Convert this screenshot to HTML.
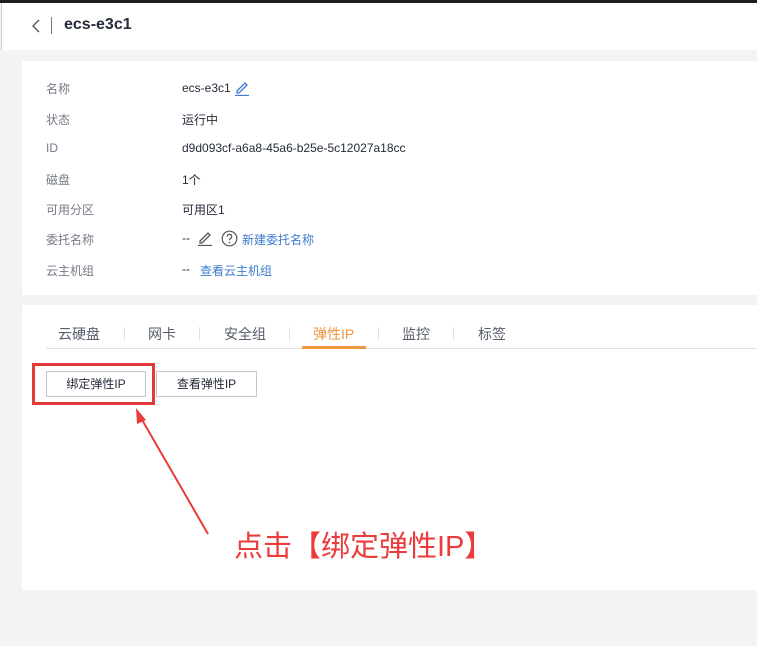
<!DOCTYPE html>
<html><head><meta charset="utf-8"><style>
*{margin:0;padding:0;box-sizing:border-box}
body{width:757px;height:646px;background:#f2f3f5;font-family:"Liberation Sans","Noto Sans CJK SC",sans-serif;position:relative;overflow:hidden;color:#252b3a}
.top{position:absolute;left:0;top:0;width:757px;height:3px;background:#1e1e1e}
.hdr{position:absolute;left:1px;top:3px;width:756px;height:47px;background:#fff;border-left:1px solid #ccc}
.abs{position:absolute;white-space:nowrap}
.card{position:absolute;left:22px;right:0;background:#fff}
.lbl{position:absolute;left:46px;font-size:12px;color:#757a86}
.val{position:absolute;left:182px;font-size:12px;color:#252b3a}
.link{color:#3c7ad0}
.tab{position:absolute;top:324px;font-size:14px;color:#575d6c}
.sep{position:absolute;top:327px;width:1px;height:14px;background:#dfe1e6}
.btn{position:absolute;top:371px;height:26px;border:1px solid #c3c6cc;background:#fff;font-size:12px;text-align:center;line-height:24px;color:#252b3a}
</style></head><body>
<div class="top"></div>
<div class="hdr"></div>
<svg class="abs" style="left:31px;top:19px" width="10" height="14"><path d="M8 1 L2 7 L8 13" stroke="#555" stroke-width="1.4" fill="none"/></svg>
<div class="abs" style="left:51px;top:17px;width:1px;height:17px;background:#777"></div>
<div class="abs" style="left:64px;top:16px;font-size:16px;font-weight:600;color:#252b3a">ecs-e3c1</div>

<div class="card" style="top:61px;height:234px"></div>
<div class="lbl" style="top:80px">名称</div><div class="val" style="top:81px">ecs-e3c1</div>
<svg class="abs" style="left:234px;top:80px" width="16" height="16"><path d="M3 11 L11 3 L13 5 L5 13 L3 13 Z" stroke="#3c7ad0" stroke-width="1.3" fill="none"/><path d="M1 15.5 H15" stroke="#3c7ad0" stroke-width="1.3"/></svg>
<div class="lbl" style="top:111px">状态</div><div class="val" style="top:111px">运行中</div>
<div class="lbl" style="top:141px">ID</div><div class="val" style="top:141px">d9d093cf-a6a8-45a6-b25e-5c12027a18cc</div>
<div class="lbl" style="top:171px">磁盘</div><div class="val" style="top:171px">1个</div>
<div class="lbl" style="top:201px">可用分区</div><div class="val" style="top:201px">可用区1</div>
<div class="lbl" style="top:231px">委托名称</div><div class="val" style="top:231px">--</div>
<svg class="abs" style="left:197px;top:230px" width="16" height="16"><path d="M3 11 L11 3 L13 5 L5 13 L3 13 Z" stroke="#555" stroke-width="1.3" fill="none"/><path d="M1 15.5 H15" stroke="#555" stroke-width="1.3"/></svg>
<svg class="abs" style="left:221px;top:230px" width="17" height="17"><circle cx="8.5" cy="8.5" r="7.3" stroke="#555" stroke-width="1.2" fill="none"/><path d="M6.3 6.6 a2.2 2.2 0 1 1 3 2 c-0.7 0.3 -0.8 0.8 -0.8 1.6" stroke="#555" stroke-width="1.2" fill="none"/><circle cx="8.5" cy="12.6" r="0.8" fill="#555"/></svg>
<div class="abs link" style="left:242px;top:231px;font-size:12px">新建委托名称</div>
<div class="lbl" style="top:262px">云主机组</div><div class="val" style="top:262px">--</div>
<div class="abs link" style="left:200px;top:262px;font-size:12px">查看云主机组</div>

<div class="card" style="top:305px;height:285px"></div>
<div class="tab" style="left:58px">云硬盘</div><div class="sep" style="left:124px"></div>
<div class="tab" style="left:148px">网卡</div><div class="sep" style="left:199px"></div>
<div class="tab" style="left:224px">安全组</div><div class="sep" style="left:289px"></div>
<div class="tab" style="left:313px;color:#f0963e">弹性IP</div><div class="sep" style="left:378px"></div>
<div class="tab" style="left:402px">监控</div><div class="sep" style="left:453px"></div>
<div class="tab" style="left:478px">标签</div>
<div class="abs" style="left:46px;top:348px;right:0;height:1px;background:#dfe1e6"></div>
<div class="abs" style="left:302px;top:346px;width:64px;height:3px;background:#f0963e"></div>
<div class="btn" style="left:46px;width:100px">绑定弹性IP</div>
<div class="btn" style="left:156px;width:101px">查看弹性IP</div>
<div class="abs" style="left:32px;top:363px;width:123px;height:42px;border:3px solid #e03a3a"></div>
<svg class="abs" style="left:0;top:0" width="757" height="646"><line x1="208" y1="534" x2="141" y2="418" stroke="#ec3b3b" stroke-width="2"/><path d="M136 408 L146 420 L137 424 Z" fill="#ec3b3b"/></svg>
<div class="abs" style="left:234px;top:523px;font-size:29px;color:#ec3b3b">点击【绑定弹性IP】</div>
</body></html>
